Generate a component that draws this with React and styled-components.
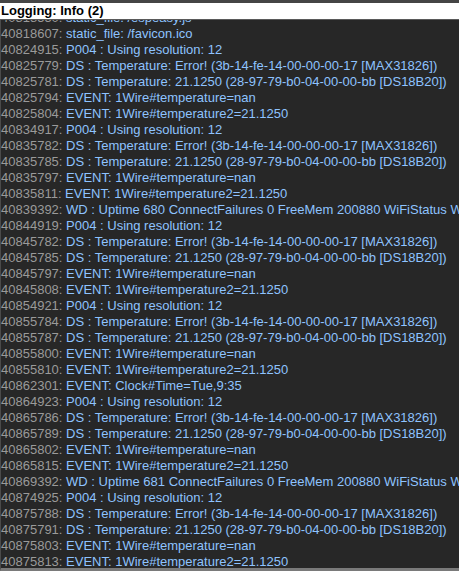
import React from 'react';
import styled, { createGlobalStyle } from 'styled-components';

const GlobalStyle = createGlobalStyle`
  html, body {
    margin: 0;
    padding: 0;
    background: #272727;
    height: 100%;
    overflow: hidden;
  }
  #root {
    height: 100%;
  }
`;

const Page = styled.div`
  display: flex;
  flex-direction: column;
  height: 100vh;
  font-family: "Liberation Sans", Arial, sans-serif;
`;

const Header = styled.div`
  flex: none;
  border-top: 3px solid #454545;
  background: #fff;
  color: #000;
  font-weight: bold;
  font-size: 13px;
  line-height: 16px;
  padding: 0 0 0 1px;
  border-bottom: 1px solid #5a5a5a;
`;

const LogBox = styled.div`
  flex: 1;
  min-height: 0;
  display: flex;
  flex-direction: column;
  justify-content: flex-end;
  overflow: hidden;
  background: #272727;
  border-left: 1px solid #4a4a4a;
  border-bottom: 3px solid #7a7a7a;
`;

const Row = styled.div`
  flex: none;
  white-space: nowrap;
  font-size: 13px;
  line-height: 20px;
  height: 16px;
`;

const Stamp = styled.span`
  color: #9a9a9a;
`;

const Msg = styled.span`
  color: #8ec3ff;
`;

const lines = [
  ['40818550', 'static_file: /espeasy.js'],
  ['40818607', 'static_file: /favicon.ico'],
  ['40824915', 'P004 : Using resolution: 12'],
  ['40825779', 'DS : Temperature: Error! (3b-14-fe-14-00-00-00-17 [MAX31826])'],
  ['40825781', 'DS : Temperature: 21.1250 (28-97-79-b0-04-00-00-bb [DS18B20])'],
  ['40825794', 'EVENT: 1Wire#temperature=nan'],
  ['40825804', 'EVENT: 1Wire#temperature2=21.1250'],
  ['40834917', 'P004 : Using resolution: 12'],
  ['40835782', 'DS : Temperature: Error! (3b-14-fe-14-00-00-00-17 [MAX31826])'],
  ['40835785', 'DS : Temperature: 21.1250 (28-97-79-b0-04-00-00-bb [DS18B20])'],
  ['40835797', 'EVENT: 1Wire#temperature=nan'],
  ['40835811', 'EVENT: 1Wire#temperature2=21.1250'],
  ['40839392', 'WD : Uptime 680 ConnectFailures 0 FreeMem 200880 WiFiStatus WL_CONNECTED'],
  ['40844919', 'P004 : Using resolution: 12'],
  ['40845782', 'DS : Temperature: Error! (3b-14-fe-14-00-00-00-17 [MAX31826])'],
  ['40845785', 'DS : Temperature: 21.1250 (28-97-79-b0-04-00-00-bb [DS18B20])'],
  ['40845797', 'EVENT: 1Wire#temperature=nan'],
  ['40845808', 'EVENT: 1Wire#temperature2=21.1250'],
  ['40854921', 'P004 : Using resolution: 12'],
  ['40855784', 'DS : Temperature: Error! (3b-14-fe-14-00-00-00-17 [MAX31826])'],
  ['40855787', 'DS : Temperature: 21.1250 (28-97-79-b0-04-00-00-bb [DS18B20])'],
  ['40855800', 'EVENT: 1Wire#temperature=nan'],
  ['40855810', 'EVENT: 1Wire#temperature2=21.1250'],
  ['40862301', 'EVENT: Clock#Time=Tue,9:35'],
  ['40864923', 'P004 : Using resolution: 12'],
  ['40865786', 'DS : Temperature: Error! (3b-14-fe-14-00-00-00-17 [MAX31826])'],
  ['40865789', 'DS : Temperature: 21.1250 (28-97-79-b0-04-00-00-bb [DS18B20])'],
  ['40865802', 'EVENT: 1Wire#temperature=nan'],
  ['40865815', 'EVENT: 1Wire#temperature2=21.1250'],
  ['40869392', 'WD : Uptime 681 ConnectFailures 0 FreeMem 200880 WiFiStatus WL_CONNECTED'],
  ['40874925', 'P004 : Using resolution: 12'],
  ['40875788', 'DS : Temperature: Error! (3b-14-fe-14-00-00-00-17 [MAX31826])'],
  ['40875791', 'DS : Temperature: 21.1250 (28-97-79-b0-04-00-00-bb [DS18B20])'],
  ['40875803', 'EVENT: 1Wire#temperature=nan'],
  ['40875813', 'EVENT: 1Wire#temperature2=21.1250'],
];

export default function App() {
  return (
    <>
      <GlobalStyle />
      <Page>
        <Header>Logging: Info (2)</Header>
        <LogBox>
          {lines.map(([t, m]) => (
            <Row key={t}>
              <Stamp>{t}: </Stamp>
              <Msg>{m}</Msg>
            </Row>
          ))}
        </LogBox>
      </Page>
    </>
  );
}
